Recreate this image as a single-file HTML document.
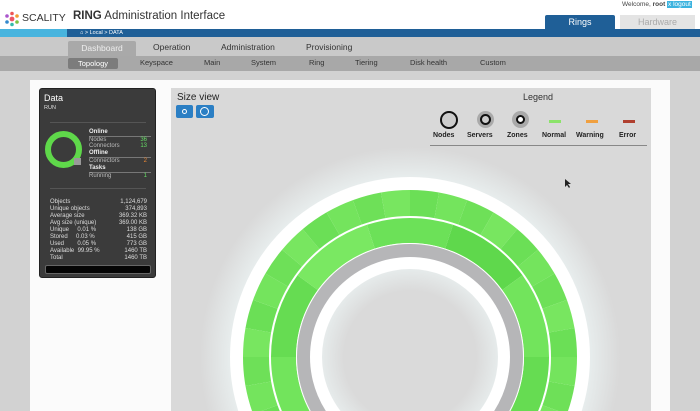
<!DOCTYPE html>
<html><head><meta charset="utf-8"><style>
*{margin:0;padding:0;box-sizing:border-box}
html,body{width:700px;height:411px;overflow:hidden}
body{background:#d2d2d2;font-family:"Liberation Sans",sans-serif;position:relative}
.a{position:absolute}
.hdr{left:0;top:0;width:700px;height:29px;background:#fff}
.tab{font-size:8.5px;color:#333;text-align:center}
.st{font-size:7.5px;color:#333;top:58px}
.card{left:39px;top:88px;width:117px;height:190px;background:#3b3b3b;border:1px solid #222;border-radius:3px;color:#ddd;font-size:6px}
.row{position:absolute;left:10px;right:8px;display:flex;justify-content:space-between}
</style></head><body>
<div class="a hdr"></div>
<svg class="a" style="left:4px;top:11px" width="16" height="16" viewBox="0 0 16 16">
<circle cx="8" cy="2.5" r="1.8" fill="#e55"/><circle cx="13" cy="5" r="1.8" fill="#f39c32"/><circle cx="13" cy="11" r="1.8" fill="#7cc242"/><circle cx="8" cy="13.5" r="1.8" fill="#3ba"/><circle cx="3" cy="11" r="1.8" fill="#38c"/><circle cx="3" cy="5" r="1.8" fill="#a5c"/><circle cx="8" cy="8" r="2.4" fill="#e56"/></svg>
<div class="a" style="left:22px;top:12px;font-size:10.5px;color:#333">SCALITY</div>
<div class="a" style="left:73px;top:10px;font-size:11.5px;color:#333"><b>RING</b> Administration Interface</div>
<div class="a" style="left:622px;top:1px;font-size:6.5px;color:#444">Welcome, <b>root</b> <span style="background:#3cb3df;color:#fff;padding:0 1px">x logout</span></div>
<div class="a" style="left:545px;top:15px;width:70px;height:15px;background:#1f5f97;color:#fff;font-size:9px;text-align:center;line-height:15px;border-radius:2px 2px 0 0">Rings</div>
<div class="a" style="left:620px;top:15px;width:75px;height:14px;background:#e4e4e4;color:#aaa;font-size:9px;text-align:center;line-height:14px">Hardware</div>
<div class="a" style="left:0;top:29px;width:67px;height:8px;background:#48b4de"></div>
<div class="a" style="left:67px;top:29px;width:633px;height:8px;background:#1f5f97"></div>
<div class="a" style="left:80px;top:29px;font-size:5.5px;color:#fff;line-height:8px">⌂ &gt; Local &gt; DATA</div>
<div class="a" style="left:0;top:37px;width:700px;height:19px;background:#c9c9c9"></div>
<div class="a tab" style="left:68px;top:41px;width:68px;height:15px;background:#a9a9a9;color:#eee;line-height:14px;border-radius:2px 2px 0 0">Dashboard</div>
<div class="a tab" style="left:153px;top:42px">Operation</div>
<div class="a tab" style="left:221px;top:42px">Administration</div>
<div class="a tab" style="left:306px;top:42px">Provisioning</div>
<div class="a" style="left:0;top:56px;width:700px;height:15px;background:#a8a8a8"></div>
<div class="a tab" style="left:68px;top:58px;width:50px;height:11px;background:#7c7c7c;color:#fff;font-size:7.5px;line-height:11px;border-radius:2px">Topology</div>
<div class="a st" style="left:140px">Keyspace</div>
<div class="a st" style="left:204px">Main</div>
<div class="a st" style="left:251px">System</div>
<div class="a st" style="left:309px">Ring</div>
<div class="a st" style="left:355px">Tiering</div>
<div class="a st" style="left:410px">Disk health</div>
<div class="a st" style="left:480px">Custom</div>
<div class="a" style="left:30px;top:80px;width:640px;height:331px;background:#fbfbfb"></div>
<div class="a" style="left:171px;top:88px;width:480px;height:323px;background:#d9d9d9;overflow:hidden">
<svg width="480" height="323" viewBox="171 88 480 323" style="position:absolute;left:0;top:0">
<defs><radialGradient id="g" cx="410" cy="357" r="210" gradientUnits="userSpaceOnUse"><stop offset="0.84" stop-color="#e9efef"/><stop offset="1" stop-color="#d9d9d9"/></radialGradient>
<radialGradient id="gi" cx="410" cy="357" r="88" gradientUnits="userSpaceOnUse"><stop offset="0.75" stop-color="#dadada"/><stop offset="1" stop-color="#e6ebeb"/></radialGradient></defs>
<circle cx="410" cy="357" r="210" fill="url(#g)"/>
<circle cx="410" cy="357" r="180" fill="#fff"/>
<g id="segs"></g>
<circle cx="410" cy="357" r="140" fill="#fff"/>
<g id="segs2"></g>
<circle cx="410" cy="357" r="114" fill="#fff"/>
<circle cx="410" cy="357" r="113" fill="#b6b6b8"/>
<circle cx="410" cy="357" r="100" fill="#fff"/>
<circle cx="410" cy="357" r="88" fill="url(#gi)"/>
<path d="M565 179 l0 8 l2 -2 l2 3 l1 -1 l-2 -3 l3 0 z" fill="#222"/>
</svg>
<div class="a" style="left:6px;top:4px;font-size:10px;color:#222">Size view</div>
<div class="a" style="left:5px;top:17px;width:17px;height:13px;background:#2b7fc4;border-radius:2px"><div class="a" style="left:6px;top:4px;width:5px;height:5px;border:1px solid #fff;border-radius:50%"></div></div>
<div class="a" style="left:25px;top:17px;width:18px;height:13px;background:#2b7fc4;border-radius:2px"><div class="a" style="left:4px;top:2px;width:9px;height:9px;border:1.5px solid #fff;border-radius:50%"></div></div>
<div class="a" style="left:352px;top:4px;font-size:9px;color:#333">Legend</div>
<div class="a" style="left:259px;top:57px;width:217px;height:1px;background:#888"></div>
</div>
<div class="a" style="left:440px;top:111px;width:18px;height:18px;border-radius:50%;border:2.5px solid #111;background:#ccc"></div>
<div class="a" style="left:477px;top:111px;width:17px;height:17px;border-radius:50%;background:#aaa"><div class="a" style="left:3px;top:3px;width:11px;height:11px;border:2px solid #111;border-radius:50%;background:#ccc"></div></div>
<div class="a" style="left:512px;top:111px;width:17px;height:17px;border-radius:50%;background:#aaa"><div class="a" style="left:4px;top:4px;width:9px;height:9px;border:2px solid #111;border-radius:50%;background:#fff"></div></div>
<div class="a" style="left:549px;top:120px;width:12px;height:3px;background:#8be36a"></div>
<div class="a" style="left:586px;top:120px;width:12px;height:3px;background:#f0a040"></div>
<div class="a" style="left:623px;top:120px;width:12px;height:3px;background:#b04030"></div>
<div class="a" style="top:132px;left:433px;font-size:7px;font-weight:bold;color:#222">Nodes</div>
<div class="a" style="top:132px;left:467px;font-size:7px;font-weight:bold;color:#222">Servers</div>
<div class="a" style="top:132px;left:507px;font-size:7px;font-weight:bold;color:#222">Zones</div>
<div class="a" style="top:132px;left:542px;font-size:7px;font-weight:bold;color:#222">Normal</div>
<div class="a" style="top:132px;left:576px;font-size:7px;font-weight:bold;color:#222">Warning</div>
<div class="a" style="top:132px;left:619px;font-size:7px;font-weight:bold;color:#222">Error</div>
<div class="a card">
<div class="a" style="left:4px;top:4px;font-size:9px;color:#fff">Data</div>
<div class="a" style="left:4px;top:16px;font-size:5.5px">RUN</div>
<div class="a" style="left:10px;top:33px;width:96px;height:1px;background:#555"></div>
<div class="a" style="left:5px;top:42px;width:37px;height:37px;border-radius:50%;border:6px solid #5fd84a"></div>
<div class="a" style="left:34px;top:69px;width:7px;height:7px;background:#999"></div>
<div class="row" style="left:49px;top:40px;font-weight:bold;color:#eee">Online</div>
<div class="a" style="left:49px;top:47px;width:62px;height:1px;background:#777"></div>
<div class="row" style="left:49px;top:48px;color:#bbb"><span>Nodes</span><span style="color:#6d6">36</span></div>
<div class="row" style="left:49px;top:54px;color:#bbb"><span>Connectors</span><span style="color:#6d6">13</span></div>
<div class="row" style="left:49px;top:61px;font-weight:bold;color:#eee">Offline</div>
<div class="a" style="left:49px;top:68px;width:62px;height:1px;background:#777"></div>
<div class="row" style="left:49px;top:69px;color:#bbb"><span>Connectors</span><span style="color:#e83">2</span></div>
<div class="row" style="left:49px;top:76px;font-weight:bold;color:#eee">Tasks</div>
<div class="a" style="left:49px;top:83px;width:62px;height:1px;background:#777"></div>
<div class="row" style="left:49px;top:84px;color:#bbb"><span>Running</span><span style="color:#6d6">1</span></div>
<div class="a" style="left:10px;top:99px;width:96px;height:1px;background:#555"></div>
<div class="row" style="top:110px"><span>Objects</span><span>1,124,679</span></div>
<div class="row" style="top:117px"><span>Unique objects</span><span>374,893</span></div>
<div class="row" style="top:124px"><span>Average size</span><span>369.32 KB</span></div>
<div class="row" style="top:131px"><span>Avg size (unique)</span><span>369.00 KB</span></div>
<div class="row" style="top:138px"><span>Unique &nbsp;&nbsp;&nbsp;&nbsp;0.01 %</span><span>138 GB</span></div>
<div class="row" style="top:145px"><span>Stored &nbsp;&nbsp;&nbsp;&nbsp;0.03 %</span><span>415 GB</span></div>
<div class="row" style="top:152px"><span>Used &nbsp;&nbsp;&nbsp;&nbsp;&nbsp;&nbsp;&nbsp;0.05 %</span><span>773 GB</span></div>
<div class="row" style="top:159px"><span>Available &nbsp;99.95 %</span><span>1460 TB</span></div>
<div class="row" style="top:166px"><span>Total</span><span>1460 TB</span></div>
<div class="a" style="left:5px;top:176px;width:106px;height:9px;background:#050505;border:1px solid #666;border-radius:2px"></div>
</div>
<script>
var cx=410,cy=357;
function p(rr,a){return (cx+rr*Math.cos(a)).toFixed(1)+' '+(cy+rr*Math.sin(a)).toFixed(1)}
function ring(id,n,R,r,cols,off){var s='';for(var i=0;i<n;i++){var a1=((i+off)/n)*2*Math.PI-Math.PI/2,a2=((i+1+off)/n)*2*Math.PI-Math.PI/2;
s+='<path d="M'+p(R,a1)+' A'+R+' '+R+' 0 0 1 '+p(R,a2)+' L'+p(r,a2)+' A'+r+' '+r+' 0 0 0 '+p(r,a1)+'Z" fill="'+cols[i%cols.length]+'"/>';}
document.getElementById(id).innerHTML=s;}
ring('segs',36,167,141,['#6bdf56','#74e45d','#6ee058','#78e660'],0);
ring('segs2',10,139,114,['#6ce158','#5fd84c','#72e45c','#66dc52','#7ae862'],-0.5);
</script>
</body></html>
